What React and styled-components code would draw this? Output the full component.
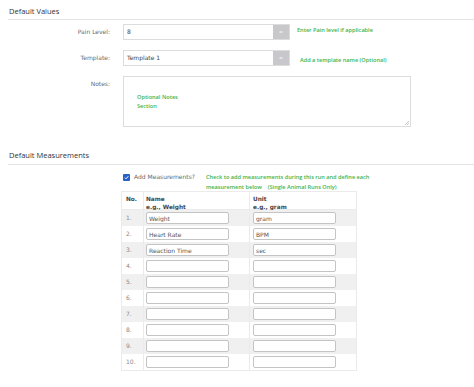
import React from 'react';
import styled, { createGlobalStyle } from 'styled-components';

const Global = createGlobalStyle`
  html, body { margin: 0; padding: 0; background: #fff; }
  body { font-family: "DejaVu Sans", Verdana, sans-serif; }
  * { box-sizing: border-box; }
`;

const Page = styled.div`
  width: 474px;
  height: 387px;
  overflow: hidden;
  background: #fff;
`;

const SectionHeader = styled.div`
  margin-left: 8px;
  padding: ${(p) => p.$top}px 0 ${(p) => p.$bottom}px 1px;
  border-bottom: 1px solid #e4e4e4;
  font-family: "Open Sans", "Liberation Sans", sans-serif;
  font-size: 7.5px;
  line-height: 10px;
  color: #333;
`;

const FormRow = styled.div`
  display: flex;
  align-items: flex-start;
  margin-top: ${(p) => p.$mt}px;
`;

const Label = styled.div`
  width: 110px;
  text-align: right;
  font-size: 6px;
  line-height: 16px;
  color: #6a6a6a;
`;

const Control = styled.div`
  margin-left: 13px;
  display: flex;
  align-items: flex-start;
`;

const Select = styled.div`
  width: 167px;
  height: 16px;
  border: 1px solid #dcdcdc;
  display: flex;
  background: #fff;
`;

const SelectValue = styled.div`
  flex: 1;
  padding-left: 3px;
  font-size: 6px;
  line-height: 14px;
  color: #444;
`;

const SelectButton = styled.div`
  width: 16px;
  background: #c8c8cc;
  display: flex;
  align-items: center;
  justify-content: center;
`;

const Hint = styled.div`
  margin-left: ${(p) => p.$ml || 0}px;
  margin-top: ${(p) => p.$mt || 0}px;
  font-family: "Open Sans", "Liberation Sans", sans-serif;
  font-weight: 600;
  font-size: 5.6px;
  line-height: 10px;
  color: #3cb44b;
  white-space: nowrap;
`;

const TextArea = styled.div`
  position: relative;
  width: 288px;
  height: 51px;
  border: 1px solid #dcdcdc;
  padding: 16px 0 0 13px;
  font-family: "Open Sans", "Liberation Sans", sans-serif;
  font-weight: 600;
  font-size: 5.6px;
  line-height: 9px;
  color: #3cb44b;
`;

const Grip = styled.svg`
  position: absolute;
  right: 1px;
  bottom: 1px;
`;

const CheckRow = styled.div`
  margin: 7px 0 0 123px;
  height: 19px;
  display: flex;
  align-items: flex-start;
`;

const CheckBox = styled.span`
  width: 7px;
  height: 7px;
  margin-top: 2px;
  border-radius: 1px;
  background: #2962c6;
  display: flex;
  align-items: center;
  justify-content: center;
  flex: none;
`;

const CheckLabel = styled.div`
  width: 72px;
  margin-left: 4px;
  font-size: 6px;
  line-height: 10px;
  color: #6a6a6a;
  white-space: nowrap;
`;

const HintBlock = styled.div`
  font-family: "Open Sans", "Liberation Sans", sans-serif;
  font-weight: 600;
  font-size: 5.6px;
  line-height: 10px;
  color: #3cb44b;
  white-space: nowrap;
`;

const Spaced = styled.span`
  margin-left: 6px;
`;

const Table = styled.div`
  margin-left: 121px;
  width: 236px;
  border: 1px solid #ebebeb;
  display: grid;
  grid-template-columns: 21px 106px 107px;
`;

const Cell = styled.div`
  height: ${(p) => (p.$head ? 18 : 16)}px;
  padding-left: ${(p) => p.$pl}px;
  border-left: ${(p) => (p.$first ? 'none' : '1px solid #ebebeb')};
  background: ${(p) => (p.$stripe ? '#f0f0f0' : '#fff')};
  border-bottom: ${(p) => (p.$head ? '1px solid #ebebeb' : 'none')};
`;

const HeadText = styled.div`
  padding-top: 3px;
  font-size: 5.8px;
  font-weight: bold;
  line-height: 8px;
  color: #444;
  white-space: nowrap;
`;

const NumText = styled.div`
  font-size: 6px;
  line-height: 16px;
  color: #888;
`;

const Input = styled.input`
  display: block;
  width: 83px;
  height: 12px;
  margin: 2px 0 0 0;
  padding: 0 0 0 2px;
  border: 1px solid #c4c4c4;
  border-radius: 2px;
  background: #fff;
  font-family: "DejaVu Sans", Verdana, sans-serif;
  font-size: 6px;
  color: #555;
  outline: none;
`;

const rows = [
  ['Weight', 'gram'],
  ['Heart Rate', 'BPM'],
  ['Reaction Time', 'sec'],
  ['', ''],
  ['', ''],
  ['', ''],
  ['', ''],
  ['', ''],
  ['', ''],
  ['', ''],
];

function Caret() {
  return (
    <svg width="4" height="3" viewBox="0 0 4 3">
      <path d="M0.5 1 L3.5 1" stroke="#fff" strokeWidth="1" />
    </svg>
  );
}

export default function App() {
  return (
    <Page>
      <Global />
      <SectionHeader $top={6} $bottom={3}>Default Values</SectionHeader>

      <FormRow $mt={4}>
        <Label>Pain Level:</Label>
        <Control>
          <Select>
            <SelectValue>8</SelectValue>
            <SelectButton><Caret /></SelectButton>
          </Select>
          <Hint $ml={7} $mt={1}>Enter Pain level if applicable</Hint>
        </Control>
      </FormRow>

      <FormRow $mt={10}>
        <Label>Template:</Label>
        <Control>
          <Select>
            <SelectValue>Template 1</SelectValue>
            <SelectButton><Caret /></SelectButton>
          </Select>
          <Hint $ml={10} $mt={5}>Add a template name (Optional)</Hint>
        </Control>
      </FormRow>

      <FormRow $mt={10}>
        <Label>Notes:</Label>
        <Control>
          <TextArea>
            Optional Notes<br />Section
            <Grip width="5" height="5" viewBox="0 0 5 5">
              <path d="M1 5 L5 1 M3 5 L5 3" stroke="#b0b0b0" strokeWidth="0.7" />
            </Grip>
          </TextArea>
        </Control>
      </FormRow>

      <SectionHeader $top={23} $bottom={4}>Default Measurements</SectionHeader>

      <CheckRow>
        <CheckBox>
          <svg width="5" height="5" viewBox="0 0 5 5">
            <path d="M0.8 2.6 L2 3.8 L4.3 1.2" stroke="#fff" strokeWidth="1" fill="none" />
          </svg>
        </CheckBox>
        <CheckLabel>Add Measurements?</CheckLabel>
        <HintBlock>
          Check to add measurements during this run and define each<br />
          measurement below<Spaced>(Single Animal Runs Only)</Spaced>
        </HintBlock>
      </CheckRow>

      <Table>
        <Cell $head $first $pl={4}><HeadText>No.</HeadText></Cell>
        <Cell $head $pl={2}><HeadText>Name<br />e.g., Weight</HeadText></Cell>
        <Cell $head $pl={3}><HeadText>Unit<br />e.g., gram</HeadText></Cell>
        {rows.map(([name, unit], i) => {
          const stripe = i % 2 === 0;
          return (
            <React.Fragment key={i}>
              <Cell $first $stripe={stripe} $pl={4}><NumText>{i + 1}.</NumText></Cell>
              <Cell $stripe={stripe} $pl={2}><Input readOnly defaultValue={name} /></Cell>
              <Cell $stripe={stripe} $pl={3}><Input readOnly defaultValue={unit} /></Cell>
            </React.Fragment>
          );
        })}
      </Table>
    </Page>
  );
}
